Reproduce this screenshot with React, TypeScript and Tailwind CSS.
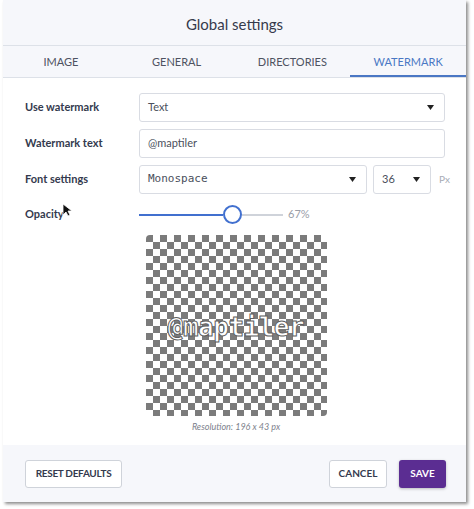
import React from "react";

const TABS = ["Image", "General", "Directories", "Watermark"];

function Caret() {
  return (
    <svg width="7" height="5" viewBox="0 0 7 5" className="shrink-0">
      <path d="M0 0h7L3.5 5z" fill="#222" />
    </svg>
  );
}

function Select({ value, mono, className }: { value: string; mono?: boolean; className?: string }) {
  return (
    <div
      className={`flex h-[29px] items-center justify-between rounded-[3px] border border-[#d9dce3] bg-white pl-[8px] pr-[10px] text-[11px] text-[#4a4f5c] ${className ?? ""}`}
    >
      <span className={mono ? "font-['DejaVu_Sans_Mono',monospace] text-[11px]" : ""}>{value}</span>
      <Caret />
    </div>
  );
}

function Row({ label, children }: { label: string; children: React.ReactNode }) {
  return (
    <div className="flex items-center">
      <div className="w-[114px] shrink-0 text-[11px] font-bold text-[#343a4e]">{label}</div>
      {children}
    </div>
  );
}

export default function App() {
  return (
    <div className="h-[509px] w-[474px] bg-white font-['Lato',sans-serif]">
      <div className="relative ml-[3px] flex h-[502px] w-[463px] flex-col bg-white shadow-[2px_2px_3px_rgba(0,0,0,0.45)]">
        {/* Header */}
        <div className="flex h-[46px] items-center justify-center border-b border-[#dde1e8] bg-[#f6f7fb] pt-[3px] text-[15px] text-[#353a4b]">
          Global settings
        </div>

        {/* Tabs */}
        <div className="grid h-[32px] grid-cols-4 border-b border-[#dde1e8] bg-[#f6f7fb]">
          {TABS.map((t) => {
            const active = t === "Watermark";
            return (
              <div
                key={t}
                className={`flex items-center justify-center text-[11px] uppercase ${
                  active ? "border-b-2 border-[#4a77c4] pt-[3px] text-[#4a77c4]" : "pt-[1px] text-[#4e5362]"
                }`}
              >
                {t}
              </div>
            );
          })}
        </div>

        {/* Form */}
        <div className="flex flex-1 flex-col gap-[7px] pl-[22px] pr-[21px] pt-[15px]">
          <Row label="Use watermark">
            <Select value="Text" className="flex-1" />
          </Row>
          <Row label="Watermark text">
            <div className="flex h-[29px] flex-1 items-center rounded-[3px] border border-[#d9dce3] bg-white px-[8px] text-[11px] text-[#4a4f5c]">
              @maptiler
            </div>
          </Row>
          <Row label="Font settings">
            <Select value="Monospace" mono className="w-[228px] shrink-0" />
            <Select value="36" className="ml-[6px] w-[58px] shrink-0" />
            <span className="ml-[8px] text-[10px] text-[#a7abb5]">Px</span>
          </Row>
          <Row label="Opacity">
            <div className="flex h-[27px] items-center">
              <div className="h-[2px] w-[84px] bg-[#4170cf]" />
              <div className="h-[19px] w-[19px] shrink-0 rounded-full border-2 border-[#4170cf] bg-white" />
              <div className="h-[2px] w-[41px] bg-[#cfd3da]" />
              <span className="ml-[5px] text-[11px] text-[#9a9ea8]">67%</span>
            </div>
          </Row>

          {/* Preview */}
          <div className="flex flex-col items-center pl-[2px]">
            <div className="flex h-[181px] w-[181px] items-center justify-center rounded-[4px] bg-[conic-gradient(#fff_25%,#7b7b7b_0_50%,#fff_0_75%,#7b7b7b_0)] bg-[length:14px_14px]">
              <span className="mt-[2px] font-['DejaVu_Sans_Mono',monospace] text-[26px] font-bold leading-none tracking-[-0.5px] text-white [-webkit-text-stroke:1px_#5e5e5e]">
                @maptiler
              </span>
            </div>
            <div className="mt-[4px] text-[9px] italic text-[#7d818c]">Resolution: 196 x 43 px</div>
          </div>
        </div>

        {/* Footer */}
        <div className="flex h-[57px] items-center justify-between bg-[#f6f7fb] pl-[22px] pr-[20px]">
          <button className="h-[28px] w-[97px] rounded-[3px] border border-[#cfd3da] bg-white text-[10px] font-bold tracking-[-0.3px] text-[#343a4e]">
            RESET DEFAULTS
          </button>
          <div className="flex gap-[12px]">
            <button className="h-[28px] w-[58px] rounded-[3px] border border-[#cfd3da] bg-white text-[10px] font-bold text-[#343a4e]">
              CANCEL
            </button>
            <button className="h-[28px] w-[47px] rounded-[3px] bg-[#5b2d92] text-[10px] font-bold text-white shadow-[0_1px_3px_rgba(0,0,0,0.25)]">
              SAVE
            </button>
          </div>
        </div>

        {/* Mouse pointer */}
        <svg className="absolute left-[59px] top-[203px]" width="10" height="14" viewBox="0 0 10 14">
          <path d="M1 1v11l3-3 2 4 2-1-2-4h4z" fill="#111" stroke="#fff" strokeWidth="0.8" />
        </svg>
      </div>
    </div>
  );
}
